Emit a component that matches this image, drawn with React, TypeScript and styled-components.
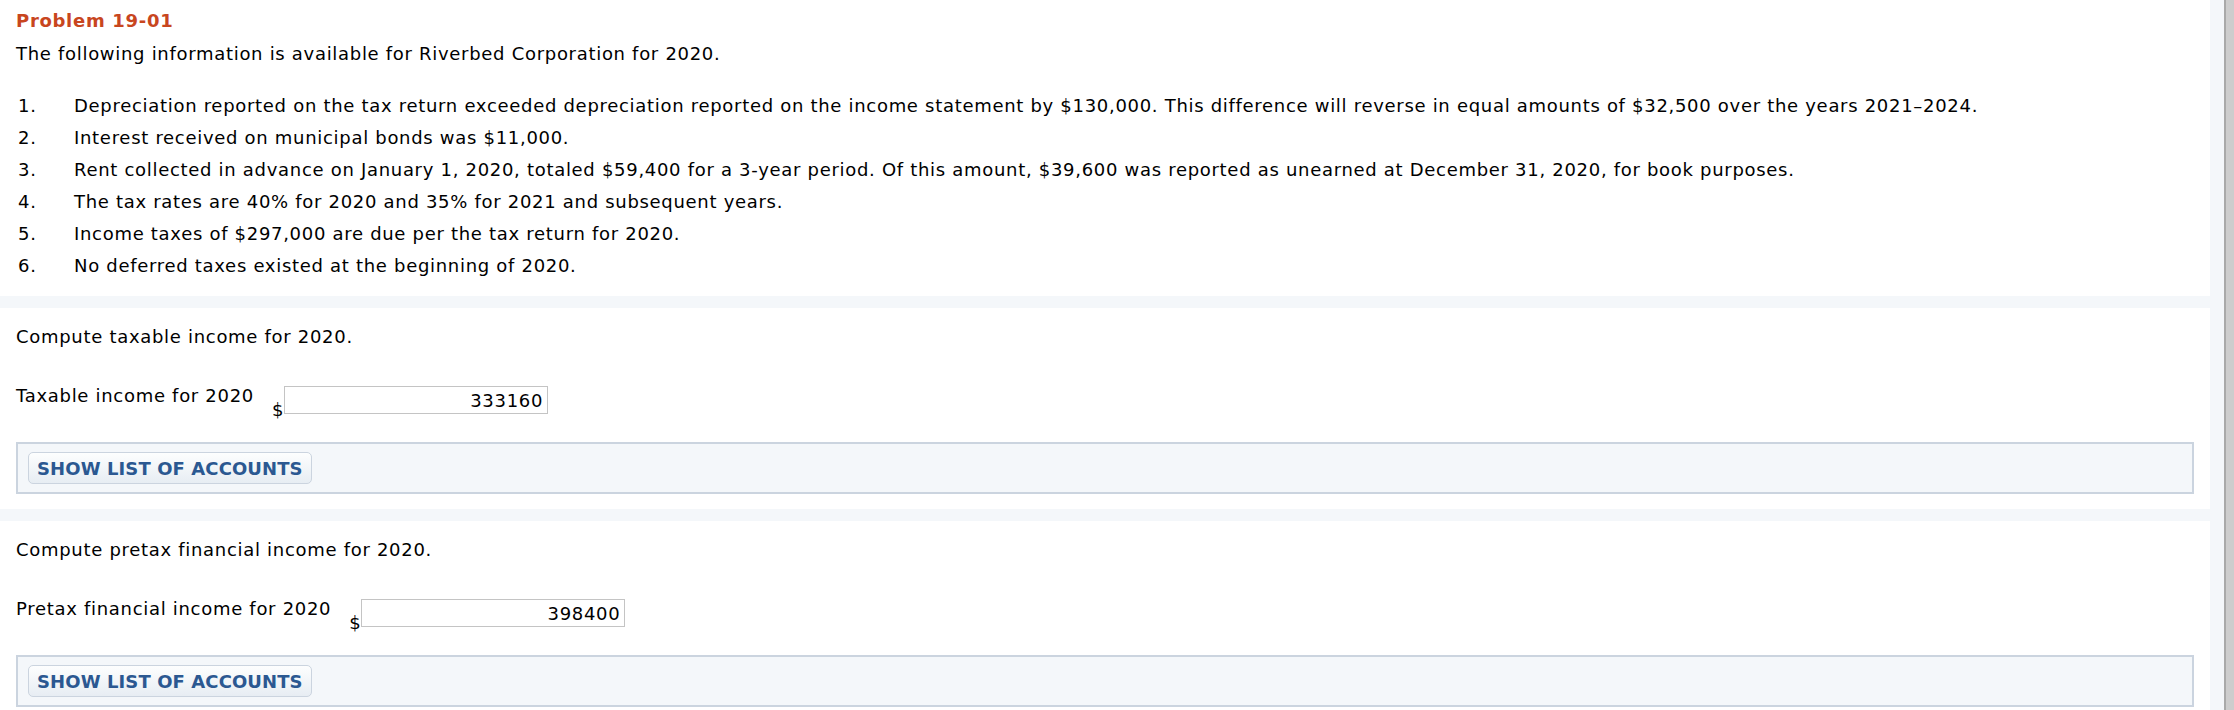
import React from 'react';
import styled, { createGlobalStyle } from 'styled-components';

const GlobalStyle = createGlobalStyle`
  html, body {
    margin: 0;
    padding: 0;
    background: #f4f7fa;
  }
  body {
    font-family: 'DejaVu Sans', Verdana, sans-serif;
    font-size: 18px;
    letter-spacing: 0.7px;
    color: #000;
  }
`;

const Page = styled.div`
  display: flex;
  min-height: 100vh;
  background: #f4f7fa;
`;

const Main = styled.div`
  width: 2210px;
  display: flex;
  flex-direction: column;
  gap: 12px;
`;

const ScrollTrack = styled.div`
  margin-left: auto;
  width: 8px;
  border-left: 2px solid #a9a9a9;
  background: #cdcdcd;
`;

const Panel = styled.section<{ $top?: number; $bottom?: number }>`
  background: #fff;
  padding: ${(p) => p.$top ?? 16}px 16px ${(p) => p.$bottom ?? 15}px;
`;

const Title = styled.h2`
  margin: 0;
  font-size: 18px;
  line-height: 26px;
  font-weight: bold;
  color: #c8461e;
`;

const Para = styled.p<{ $gap?: number }>`
  margin: ${(p) => p.$gap ?? 0}px 0 0;
  line-height: 26px;
`;

const List = styled.ol`
  list-style: none;
  margin: 23px 0 0;
  padding: 0;
`;

const Item = styled.li`
  display: grid;
  grid-template-columns: 58px 1fr;
  line-height: 32px;
`;

const Num = styled.span`
  padding-left: 2px;
`;

const AnswerRow = styled.div`
  display: flex;
  align-items: flex-start;
  margin-top: 33px;
`;

const Label = styled.span`
  line-height: 26px;
  margin-right: 18px;
`;

const Dollar = styled.span`
  line-height: 26px;
  margin-top: 14px;
`;

const Amount = styled.input`
  box-sizing: border-box;
  width: 264px;
  height: 28px;
  margin-top: 3px;
  border: 1px solid #c4c4c4;
  padding: 0 4px;
  font: inherit;
  letter-spacing: 0.7px;
  text-align: right;
  color: #000;
  background: #fff;
  outline: none;
`;

const AccountsBar = styled.div`
  margin-top: 19px;
  border: 2px solid #cbd4df;
  background: #f4f7fa;
  padding: 8px 10px;
`;

const AccountsButton = styled.button`
  box-sizing: border-box;
  height: 32px;
  padding: 0 8px;
  border: 1px solid #cbd4df;
  border-radius: 5px;
  background: linear-gradient(#fdfefe, #e7edf3);
  font-family: 'DejaVu Sans', Verdana, sans-serif;
  font-size: 18px;
  letter-spacing: 0.1px;
  font-weight: bold;
  color: #2b5891;
  cursor: pointer;
`;

const facts = [
  'Depreciation reported on the tax return exceeded depreciation reported on the income statement by $130,000. This difference will reverse in equal amounts of $32,500 over the years 2021\u20132024.',
  'Interest received on municipal bonds was $11,000.',
  'Rent collected in advance on January 1, 2020, totaled $59,400 for a 3-year period. Of this amount, $39,600 was reported as unearned at December 31, 2020, for book purposes.',
  'The tax rates are 40% for 2020 and 35% for 2021 and subsequent years.',
  'Income taxes of $297,000 are due per the tax return for 2020.',
  'No deferred taxes existed at the beginning of 2020.',
];

const questions = [
  { prompt: 'Compute taxable income for 2020.', label: 'Taxable income for 2020', value: '333160' },
  { prompt: 'Compute pretax financial income for 2020.', label: 'Pretax financial income for 2020', value: '398400' },
];

export default function App() {
  return (
    <>
      <GlobalStyle />
      <Page>
        <Main>
          <Panel $top={8} $bottom={14}>
            <Title>Problem 19-01</Title>
            <Para $gap={7}>The following information is available for Riverbed Corporation for 2020.</Para>
            <List>
              {facts.map((f, i) => (
                <Item key={i}>
                  <Num>{i + 1}.</Num>
                  <span>{f}</span>
                </Item>
              ))}
            </List>
          </Panel>
          {questions.map((q) => (
            <Panel key={q.label}>
              <Para>{q.prompt}</Para>
              <AnswerRow>
                <Label>{q.label}</Label>
                <Dollar>$</Dollar>
                <Amount type="text" defaultValue={q.value} />
              </AnswerRow>
              <AccountsBar>
                <AccountsButton type="button">SHOW LIST OF ACCOUNTS</AccountsButton>
              </AccountsBar>
            </Panel>
          ))}
        </Main>
        <ScrollTrack />
      </Page>
    </>
  );
}
